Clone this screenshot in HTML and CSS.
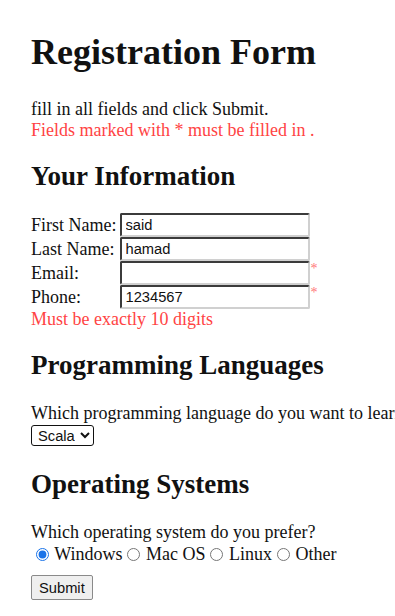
FILE: index.html
```html
<!DOCTYPE html>
<html>
<head>
<meta charset="utf-8">
<title>Registration Form</title>
<link rel="stylesheet" href="styles.css">
</head>
<body>
<h1 class="title">Registration Form</h1>
<p class="intro">fill in all fields and click Submit.<br><span class="red">Fields marked with * must be filled in .</span></p>

<h2 class="section">Your Information</h2>
<table class="info">
  <tr><td class="lbl">First Name:</td><td><input class="field" type="text" value="said"></td><td></td></tr>
  <tr><td class="lbl">Last Name:</td><td><input class="field" type="text" value="hamad"></td><td></td></tr>
  <tr><td class="lbl">Email:</td><td><input class="field" type="text" value=""></td><td class="star">*</td></tr>
  <tr><td class="lbl">Phone:</td><td><input class="field" type="text" value="1234567"></td><td class="star">*</td></tr>
</table>
<div class="red">Must be exactly 10 digits</div>

<h2 class="section q-head">Programming Languages</h2>
<p class="question">Which programming language do you want to learn?<br><select class="lang"><option>Scala</option></select></p>

<h2 class="section q-head">Operating Systems</h2>
<p class="question last">Which operating system do you prefer?<br><label class="opt"><input class="radio" type="radio" name="os" checked> Windows</label><label class="opt"><input class="radio" type="radio" name="os"> Mac OS</label><label class="opt"><input class="radio" type="radio" name="os"> Linux</label><label class="opt"><input class="radio" type="radio" name="os"> Other</label></p>
<button class="submit" type="button">Submit</button>
</body>
</html>
```
FILE: styles.css
```css
html {
  overflow: hidden;
  background: #fff;
}
body {
  margin: 0;
  padding: 8px 31px;
  font-family: "Liberation Serif", "Times New Roman", serif;
  font-size: 18px;
  color: #111;
}
.title {
  font-size: 36px;
  margin: 23px 0 26px;
}
.intro {
  margin: 18px 0;
}
.red {
  color: #f44;
}
.section {
  font-size: 27px;
  margin: 20px 0 21px;
}
.section.q-head {
  margin-bottom: 22px;
}
.info {
  border-collapse: separate;
  border-spacing: 0;
}
.info td {
  padding: 0;
}
.lbl {
  padding-right: 3px !important;
  white-space: nowrap;
}
.field {
  width: 190px;
  height: 24px;
  box-sizing: border-box;
  margin: 0;
  padding: 1px 4px;
  border: 2px inset #e0e0e0;
  border-color: #8f8f8f #d0d0d0 #d0d0d0 #8f8f8f;
  border-radius: 2px;
  font-family: "Liberation Sans", Arial, sans-serif;
  font-size: 14.7px;
  color: #111;
}
.star {
  color: #f77;
  font-size: 14px;
  vertical-align: top;
  padding-left: 1px !important;
}
.question {
  margin: 18px 0 23px;
  white-space: nowrap;
}
.question.last {
  margin-bottom: 10px;
}
.lang {
  font-family: "Liberation Sans", Arial, sans-serif;
  font-size: 14.7px;
  height: 21px;
  border: 1.5px solid #111;
  border-radius: 3px;
  background: #fff;
  color: #111;
  padding: 0 2px;
  margin: 1px 0 0;
}
.radio {
  width: 13px;
  height: 13px;
  margin: 5px 1px 0 5px;
  vertical-align: -1px;
  accent-color: #1a73e8;
}
.submit {
  font-family: "Liberation Sans", Arial, sans-serif;
  font-size: 14.7px;
  padding: 2px 7px;
  height: 25px;
  border: 1px solid #8a8a8a;
  border-radius: 2px;
  background: #efefef;
  color: #111;
}
```
